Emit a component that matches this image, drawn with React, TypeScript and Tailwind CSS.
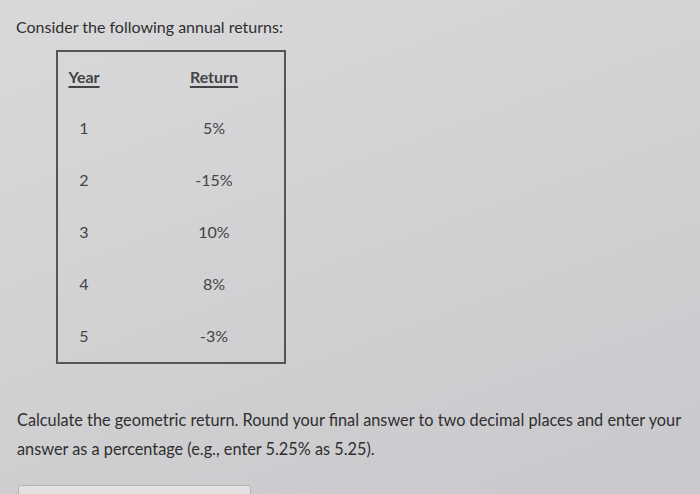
const rows = [
  { year: "1", ret: "5%" },
  { year: "2", ret: "-15%" },
  { year: "3", ret: "10%" },
  { year: "4", ret: "8%" },
  { year: "5", ret: "-3%" },
];

const App = () => {
  return (
    <div className="w-[700px] h-[494px] overflow-hidden bg-[linear-gradient(160deg,#d9d9db_0%,#d2d2d4_45%,#c9c8cc_100%)] font-['Lato','Liberation_Sans',sans-serif] text-[#2f2f2f]">
      <p className="pl-4 pt-[17px] text-[16px] leading-[20px]">Consider the following annual returns:</p>

      <div className="ml-[56px] mt-[13px] w-[230px] border-2 border-[#555]">
        <div className="grid grid-cols-[52px_138px] gap-x-[35px]">
          <div className="h-[50px] flex items-center justify-center">
            <span className="text-[16px] font-bold text-[#444] underline underline-offset-[3px] decoration-[1.5px]">Year</span>
          </div>
          <div className="h-[50px] flex items-center justify-center">
            <span className="text-[16px] font-bold text-[#444] underline underline-offset-[3px] decoration-[1.5px]">Return</span>
          </div>
          {rows.map((r) => (
            <>
              <div key={"y" + r.year} className="h-[52px] flex items-center justify-center text-[16px] text-[#444]">
                {r.year}
              </div>
              <div key={"r" + r.year} className="h-[52px] flex items-center justify-center text-[16px] text-[#444]">
                {r.ret}
              </div>
            </>
          ))}
        </div>
      </div>

      <p className="pl-[17px] pt-[41px] w-[690px] text-[16.3px] leading-[29px]">
        Calculate the geometric return. Round your final answer to two decimal places and enter your answer as a percentage (e.g., enter 5.25% as 5.25).
      </p>

      <div className="ml-[18px] mt-[22px] w-[233px] h-[30px] rounded-[3px] border border-[#b5b5b5] bg-[#e2e2e2]"></div>
    </div>
  );
};

export default App;
